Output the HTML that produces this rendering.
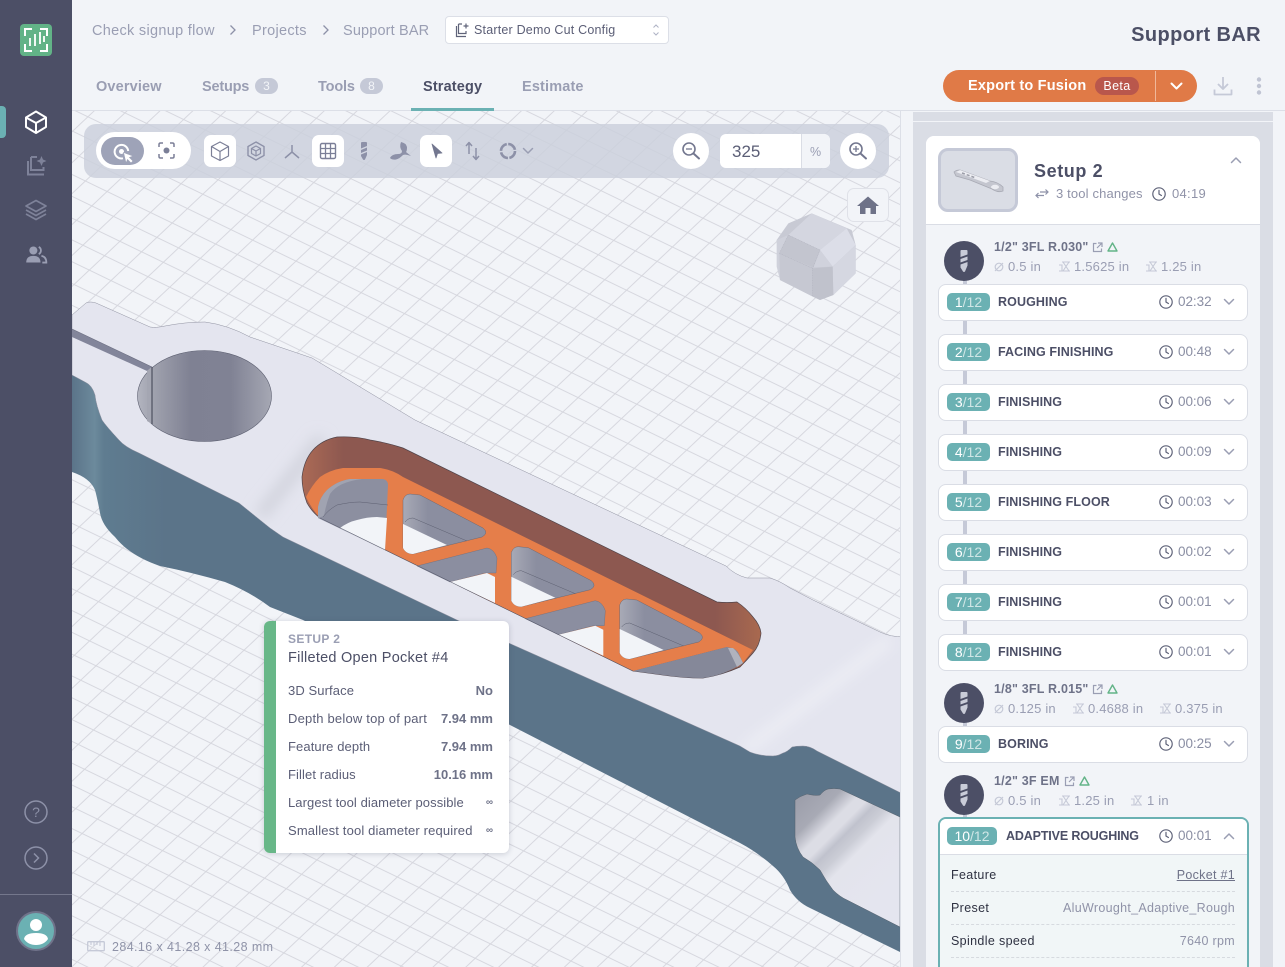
<!DOCTYPE html>
<html><head><meta charset="utf-8"><title>Support BAR</title>
<style>
*{box-sizing:border-box}
html,body{margin:0;padding:0;width:1285px;height:967px;overflow:hidden}
body{background:#f2f4f8;font-family:"Liberation Sans","DejaVu Sans",sans-serif;color:#4c4f66}
#w{position:relative;width:1285px;height:967px;overflow:hidden}
.a{position:absolute;white-space:nowrap}
.t{position:absolute;white-space:nowrap;line-height:18px;height:18px}
svg{position:absolute;overflow:visible}
.crumb{font-size:14.5px;color:#9a9eb3;letter-spacing:.3px;top:22px}
.tab{font-size:14.5px;font-weight:bold;color:#9a9eb3;top:78px;letter-spacing:.15px}
.cnt{position:absolute;top:78px;height:16px;width:23px;border-radius:8px;background:#c5c9d7;color:#f2f4f8;font-size:12px;text-align:center;line-height:16px}
.ibox{position:absolute;top:135px;width:32px;height:32px;background:#fff;border-radius:7px}
.op{position:absolute;left:938px;width:310px;height:37px;background:#fff;border:1px solid #dadde5;border-radius:8px}
.bdg{position:absolute;left:8px;top:8px;height:18px;width:43px;border-radius:5px;background:#6bb1b3;color:#fff;font-size:14px;line-height:18px;text-align:center}
.bdg i{font-style:normal;color:#cfe6e6}
.nm{position:absolute;left:59px;top:8px;line-height:18px;font-size:12.5px;font-weight:bold;letter-spacing:.1px;color:#4c4f66;white-space:nowrap}
.tm{position:absolute;left:239px;top:8px;line-height:18px;font-size:13.5px;color:#8a8ea3;letter-spacing:-.05px}
.con{position:absolute;left:963px;width:4px;background:#c5c9d7}
.tname{font-size:12.5px;font-weight:bold;color:#6e7288;letter-spacing:.2px}
.st{font-size:13px;color:#9a9eb3;letter-spacing:.2px}
.tr{font-size:13px;color:#5b5e76;left:288px;letter-spacing:.1px}
.tv{font-size:13px;color:#6e7288;font-weight:bold;right:792px;letter-spacing:0}
.fl{font-size:12.5px;color:#2f3242;left:951px;letter-spacing:.35px}
.fv{font-size:12.5px;color:#9093a8;right:50px;letter-spacing:.3px}
.dash{position:absolute;left:951px;width:284px;border-top:1px dashed #d6dadf}
</style></head><body><div id="w">

<svg width="0" height="0" style="position:absolute;left:0;top:0">
<defs>
<symbol id="clock" viewBox="0 0 14 14"><circle cx="7" cy="7" r="6.200" fill="none" stroke="#5f6379" stroke-width="1.200"/><path d="M7 3.400V7l2.400 1.500" fill="none" stroke="#5f6379" stroke-width="1.200" stroke-linecap="round"/></symbol>
<symbol id="down" viewBox="0 0 12 8"><path d="M1.500 1.500 6 6l4.500-4.500" fill="none" stroke="#9a9eb3" stroke-width="1.500" stroke-linecap="round" stroke-linejoin="round"/></symbol>
<symbol id="up" viewBox="0 0 12 8"><path d="M1.500 6.500 6 2l4.500 4.500" fill="none" stroke="#9a9eb3" stroke-width="1.500" stroke-linecap="round" stroke-linejoin="round"/></symbol>
<symbol id="tool" viewBox="0 0 40 40"><circle cx="20" cy="20" r="20" fill="#4c4f66"/><path d="M16.500 10q0-1 1-1h5q1 0 1 1v3.500l-7 2.500zM16.500 18l7-2.500v3.500l-7 2.500zM16.500 23.500l7-2.500v3.500l-2.500 6q-1 1-2 0l-2.500-4z" fill="#c9ccd8"/></symbol>
<symbol id="ext" viewBox="0 0 11 11"><path d="M9.500 6.500v3h-8v-8h3M6 1h4v4M10 1 5 6" fill="none" stroke="#9a9eb3" stroke-width="1.200"/></symbol>
<symbol id="tri" viewBox="0 0 11 10"><path d="M5.500 1 10 9H1z" fill="none" stroke="#62b387" stroke-width="1.400" stroke-linejoin="round"/></symbol>
<symbol id="dia" viewBox="0 0 10 10"><circle cx="5" cy="5" r="3.800" fill="none" stroke="#c5c9d7" stroke-width="1.200"/><path d="M1 9 9 1" stroke="#c5c9d7" stroke-width="1.200"/></symbol>
<symbol id="flute" viewBox="0 0 13 11"><path d="M1 4h3v6H1M4 1h8M5 1l6 9M11 1 5 10M4 10h8" fill="none" stroke="#c5c9d7" stroke-width="1.100"/></symbol>
</defs></svg>

<!-- viewport -->
<svg style="left:72px;top:111px" width="828" height="856" viewBox="72 111 828 856">
<defs>
<pattern id="g" patternUnits="userSpaceOnUse" width="100" height="100" patternTransform="matrix(.217 .105 .153 -.144 533.3 223.3)">
<rect x="0" y="-2.500" width="100" height="5" fill="#d6d7de"/><rect x="0" y="97.500" width="100" height="5" fill="#d6d7de"/>
<rect x="-2.200" y="0" width="4.400" height="100" fill="#d6d7de"/><rect x="97.800" y="0" width="4.400" height="100" fill="#d6d7de"/>
</pattern>
<filter id="b5" x="-100%" y="-100%" width="300%" height="300%"><feGaussianBlur stdDeviation="7"/></filter>
<path id="surf" d="M72 315 L86 303Q90 301 96 303L150 327Q156 328 165 326Q185 322 205 322Q228 325 250 337L312 358 415 420 726 566Q735 575 747 578L770 578Q780 581 790 588L813 600 880 632Q890 637 905 637V795L817 751Q810 746 803 746Q796 746 792 747Q787 752 783 753Q778 756 773 756Q760 756 750 752L740 746 457 620 283 537 270 528 239 503 139 453Q125 447 119 440Q106 426 102 420 96 405 95 395 92 385 85 382L72 375Z"/>
<clipPath id="sc"><use href="#surf"/></clipPath>
<linearGradient id="wall" x1="302" x2="761" y1="0" y2="0" gradientUnits="userSpaceOnUse">
<stop offset="0" stop-color="#ab6a55"/><stop offset=".09" stop-color="#8d5850"/><stop offset=".9" stop-color="#8d5850"/><stop offset="1" stop-color="#a9694f"/></linearGradient>
<linearGradient id="hole" x1="137" x2="271" y1="0" y2="0" gradientUnits="userSpaceOnUse">
<stop offset="0" stop-color="#b3b5c0"/><stop offset=".12" stop-color="#a0a2ae"/><stop offset=".4" stop-color="#7f8193"/><stop offset=".7" stop-color="#808294"/><stop offset="1" stop-color="#a5a7b3"/></linearGradient>
<linearGradient id="win" x1="795" y1="800" x2="885" y2="890" gradientUnits="userSpaceOnUse">
<stop offset="0" stop-color="#9c9eaa"/><stop offset=".2" stop-color="#a8aab5"/><stop offset=".33" stop-color="#dcdde5"/><stop offset=".4" stop-color="#dcdde5"/><stop offset=".47" stop-color="#c0c2cd"/><stop offset=".55" stop-color="#cbcdd6"/><stop offset=".64" stop-color="#e3e4ec"/><stop offset="1" stop-color="#e4e5ef"/></linearGradient>
<linearGradient id="blue" x1="72" x2="260" y1="0" y2="0" gradientUnits="userSpaceOnUse">
<stop offset="0" stop-color="#5b7489"/><stop offset=".12" stop-color="#6c8a9c"/><stop offset=".17" stop-color="#5f7c90"/><stop offset=".5" stop-color="#5b7489"/></linearGradient>
<linearGradient id="wg" x1="0" x2="1" y1="0" y2="0"><stop offset="0" stop-color="#a8aab6"/><stop offset=".3" stop-color="#8b8ea0"/><stop offset="1" stop-color="#8b8ea0"/></linearGradient>
<g id="tri1">
<path d="M403 500Q405 494 410 494L420 495 483 528Q489 533 482 537L413 554Q406 554 403 548Z" fill="url(#wg)" stroke="#5c5f70" stroke-width=".4"/>
<path d="M403 524 447 545 413 554Q406 554 403 548Z" fill="#f2f4f8"/>
<path d="M405 522Q408 518 413 518L467 541" fill="none" stroke="#5c5f70" stroke-width=".5"/>
</g>
<g id="seg1">
<path d="M417 566 487 548Q494 549 497 558L496 573 485 573 450 582Z" fill="#8b8ea0" stroke="#6a6d80" stroke-width=".4"/>
<path d="M450 582 487 573 495 577 495 603Z" fill="#f2f4f8"/>
</g>
</defs>
<rect x="72" y="111" width="828" height="856" fill="#f2f4f8"/>
<rect x="72" y="111" width="828" height="856" fill="url(#g)"/>

<!-- blue side -->
<path d="M72 375 L900 792 V952 L810 908 Q797 902 790 890 Q784 875 773 866 Q757 852 740 843 L510 725 L303 620 L270 607 Q250 592 225 582 Q190 572 160 566 Q130 556 115 537 Q102 525 100 513 Q97 497 95 490 Q90 478 72 472Z" fill="url(#blue)"/>
<!-- top surface -->
<use href="#surf" fill="#e4e5ef" stroke="#8f91a0" stroke-width=".5"/>
<g clip-path="url(#sc)">
<path d="M322 438 260 516" stroke="#d0d2db" stroke-width="12" filter="url(#b5)" fill="none"/>
<path d="M890 640 745 750" stroke="#eff0f6" stroke-width="9" filter="url(#b5)" fill="none"/>
</g>
<!-- window -->
<path d="M795 800Q800 796 807 794 815 796 820 795 824 790 828 789 834 788 840 789L900 817V927L847 900Q840 897 833 890 826 881 820 870 812 862 803 857 796 848 795 837Z" fill="url(#win)" stroke="#54606c" stroke-width=".5"/>
<!-- round hole -->
<ellipse cx="204.500" cy="396" rx="67" ry="45.500" fill="url(#hole)" stroke="#5c5f70" stroke-width=".6"/>
<path d="M72 329 152 367 147 371 72 337Z" fill="#82859a"/>
<path d="M72 329 152 367" stroke="#6b6e80" stroke-width=".6"/>
<path d="M147 371 152 367V424L147 421Z" fill="#a4a6b2"/>
<path d="M152 367V424" stroke="#4e5060" stroke-width="1.200"/>

<!-- pocket -->
<path d="M302 477Q304 460 313 450 322 440 337 437 355 436 370 440 388 443 403 448L717 602Q727 603 737 602 746 608 753 617 760 625 761 633 760 645 753 653 747 660 740 667 722 675 703 678 683 678 663 675L633 671 320 518Q312 512 307 503 302 490 302 477Z" fill="url(#wall)" stroke="#50444a" stroke-width=".7"/>
<path d="M306 497Q312 485 320 477 330 470 343 468L380 468Q393 470 403 477L753 650 743 663 727 647 633 671 320 518Q311 508 306 497Z" fill="#e57e4a"/>
<path d="M318 518V507Q320 497 327 490 337 481 350 479L383 479Q388 480 388 485L385 550Z" fill="#8c8fa0"/>
<path d="M318 518V507Q320 497 327 490 337 481 350 479L362 479Q338 482 330 494 326 504 324 516Z" fill="#a0a3b1"/>
<path d="M340 528Q348 522 357 520 367 517 377 517L387 518 385 550Z" fill="#f2f4f8"/>
<path d="M323 517Q328 510 337 505 350 502 360 502L388 505" fill="none" stroke="#5c5f70" stroke-width=".5"/>
<use href="#tri1"/>
<use href="#tri1" x="108.300" y="52.700"/>
<use href="#tri1" x="216.700" y="105"/>
<use href="#seg1"/>
<use href="#seg1" x="108.300" y="52.700"/>
<path d="M633 671 727 647Q735 648 738 652L743 663Q725 675 703 678 683 678 663 675Z" fill="#858899"/>
<path d="M733 648Q738 652 743 663L737 667 728 648Z" fill="#b0b2bd"/>
<path d="M320 518 633 671" stroke="#55586a" stroke-width=".5" fill="none"/>

<!-- nav cube -->
<g transform="translate(660 120) scale(.33333)">
<path d="M350 360 385 310 455 280 575 330 587 375V460L520 525 480 540 360 480Z" fill="#c8cad4"/>
<path d="M385 345 455 280 560 325 480 390Z" fill="#d4d6e0"/>
<path d="M480 390 560 325 587 375 518 440Z" fill="#dcdee8"/>
<path d="M518 440 587 375V460L520 525Z" fill="#d5d7e1"/>
<path d="M385 345 480 390 460 442 358 400Z" fill="#c3c5cf"/>
<path d="M480 390 518 440 460 442Z" fill="#d0d2dc"/>
<path d="M358 400 458 445V530L360 480Z" fill="#c6c8d2"/>
<path d="M458 445 518 440 520 525 480 540 458 530Z" fill="#c0c2cc"/>
<path d="M350 360 385 345 358 400 360 480 350 440Z" fill="#cfd1db"/>
<path d="M385 345 358 400 458 445 480 390ZM458 445V530" fill="none" stroke="#a8aab6" stroke-width="1.200" stroke-dasharray="3 2"/>
</g>
</svg>

<!-- toolbar -->
<div class="a" style="left:84px;top:124px;width:805px;height:54px;border-radius:12px;background:rgba(203,207,220,.82)"></div>
<div class="a" style="left:96px;top:132px;width:95px;height:37px;border-radius:19px;background:#fff"></div>
<div class="a" style="left:101px;top:137px;width:43px;height:28px;border-radius:14px;background:#9ea3b8"></div>
<svg style="left:112px;top:140px" width="24" height="24" viewBox="0 0 24 24"><path d="M11 18.300A6.800 6.800 0 1 1 16.200 11" fill="none" stroke="#fff" stroke-width="2"/><circle cx="9.500" cy="11.500" r="2.500" fill="#fff"/><path d="M11.500 12.500 21 16 17.500 17.500 21 21 19 23 15.500 19.500 14 23Z" fill="#fff" stroke="#9ea3b8" stroke-width=".6"/></svg>
<svg style="left:158px;top:142px" width="17" height="17" viewBox="0 0 17 17"><path d="M1 5V2.500Q1 1 2.500 1H5M12 1h2.500Q16 1 16 2.500V5M16 12v2.500Q16 16 14.500 16H12M5 16H2.500Q1 16 1 14.500V12" fill="none" stroke="#7b7f97" stroke-width="1.500"/><circle cx="8.500" cy="8.500" r="3" fill="#7b7f97"/></svg>
<div class="ibox" style="left:204px"></div><div class="ibox" style="left:312px"></div><div class="ibox" style="left:420px"></div>
<svg style="left:209px;top:140px" width="22" height="22" viewBox="0 0 22 22"><path d="M11 2 19.500 6.500V16L11 20.500 2.500 16V6.500ZM2.500 6.500 11 11.500 19.500 6.500M11 11.500V20.500" fill="none" stroke="#7b7f97" stroke-width="1.200" stroke-linejoin="round"/></svg>
<svg style="left:246px;top:141px" width="20" height="20" viewBox="0 0 20 20"><path d="M10 1 18 5.500V14.500L10 19 2 14.500V5.500Z" fill="none" stroke="#8d91a8" stroke-width="1.400"/><path d="M10 5 14.500 7.500V12.500L10 15 5.500 12.500V7.500ZM5.500 7.500 10 10 14.500 7.500M10 10V15" fill="none" stroke="#8d91a8" stroke-width="1.200"/></svg>
<svg style="left:283px;top:141px" width="18" height="20" viewBox="0 0 18 20"><path d="M9 4V11M9 11 2 17M9 11 16 17" fill="none" stroke="#8d91a8" stroke-width="1.500"/></svg>
<svg style="left:318px;top:141px" width="20" height="20" viewBox="0 0 20 20"><rect x="2.500" y="2.500" width="15" height="15" rx="1.500" fill="none" stroke="#7b7f97" stroke-width="1.400"/><path d="M7.500 2.500v15M12.500 2.500v15M2.500 7.500h15M2.500 12.500h15" stroke="#7b7f97" stroke-width="1.300"/></svg>
<svg style="left:359px;top:141px" width="10" height="20" viewBox="0 0 10 20"><path d="M2 2q0-1 1-1h4q1 0 1 1v3L2 7.500zM2 9l6-2.500V9.500L2 12zM2 13.500 8 11v3L6 18.500q-1 1-2 0L2 15z" fill="#8d91a8"/></svg>
<svg style="left:389px;top:140px" width="24" height="22" viewBox="0 0 24 22"><path d="M1 18Q3 14 9 14 13 14 13 11 10 7 12 2 17 3 18 7 18 11 17 12L22 16Q17 14 14 15 10 19 7 19.500 3 20 1 18Z" fill="#8d91a8"/></svg>
<svg style="left:429px;top:143px" width="14" height="16" viewBox="0 0 14 16"><path d="M3 1 13 10 8.500 10.500 7 15Z" fill="#73778f" stroke="#73778f" stroke-width=".8" stroke-linejoin="round"/></svg>
<svg style="left:464px;top:141px" width="17" height="20" viewBox="0 0 17 20"><path d="M5 13V2M2 5l3-3.500L8 5M12 7v11M9 15l3 3.500L15 15" fill="none" stroke="#8d91a8" stroke-width="1.500" stroke-linejoin="round"/></svg>
<svg style="left:499px;top:142px" width="18" height="18" viewBox="0 0 18 18"><circle cx="9" cy="9" r="7" fill="none" stroke="#8d91a8" stroke-width="2.600" stroke-dasharray="9.500 1.500"/></svg>
<svg style="left:522px;top:147px" width="12" height="8"><use href="#down" width="12" height="8"/></svg>

<div class="a" style="left:673px;top:133px;width:36px;height:36px;border-radius:50%;background:#fff"></div>
<svg style="left:681px;top:141px" width="20" height="20" viewBox="0 0 20 20"><circle cx="8" cy="8" r="6" fill="none" stroke="#73778f" stroke-width="1.600"/><path d="M5 8h6" stroke="#73778f" stroke-width="1.300"/><path d="M12.500 12.500 18 17.500" stroke="#73778f" stroke-width="2" stroke-linecap="round"/></svg>
<div class="a" style="left:720px;top:134px;width:110px;height:34px;border-radius:6px;background:#fff"></div>
<div class="a" style="left:801px;top:134px;width:29px;height:34px;border-radius:0 6px 6px 0;background:#f2f4f8;border-left:1px solid #dadde5"></div>
<div class="t" style="left:732px;top:143px;font-size:17px;color:#5b5e76;letter-spacing:0">325</div>
<div class="t" style="left:810px;top:143px;font-size:12.500px;color:#9a9eb3">%</div>
<div class="a" style="left:840px;top:133px;width:36px;height:36px;border-radius:50%;background:#fff"></div>
<svg style="left:848px;top:141px" width="20" height="20" viewBox="0 0 20 20"><circle cx="8" cy="8" r="6" fill="none" stroke="#73778f" stroke-width="1.600"/><path d="M5 8h6M8 5v6" stroke="#73778f" stroke-width="1.300"/><path d="M12.500 12.500 18 17.500" stroke="#73778f" stroke-width="2" stroke-linecap="round"/></svg>
<div class="a" style="left:847px;top:188px;width:42px;height:34px;border-radius:7px;background:#f2f4f8;border:1px solid #dfe1e8"></div>
<svg style="left:857px;top:196px" width="22" height="18" viewBox="0 0 22 18"><path d="M11 .5 22 10H19V18H13.500V12H8.500V18H3V10H0Z" fill="#6e7288"/></svg>

<!-- header -->
<div class="a" style="left:72px;top:0;width:1213px;height:111px;background:#f2f4f8;border-bottom:1px solid #dcdfe7"></div>
<div class="t crumb" style="left:92px">Check signup flow</div>
<svg style="left:229px;top:24px" width="8" height="12" viewBox="0 0 8 12"><path d="M1.500 1.500 6 6l-4.500 4.500" fill="none" stroke="#8d91a8" stroke-width="1.300"/></svg>
<div class="t crumb" style="left:252px">Projects</div>
<svg style="left:322px;top:24px" width="8" height="12" viewBox="0 0 8 12"><path d="M1.500 1.500 6 6l-4.500 4.500" fill="none" stroke="#8d91a8" stroke-width="1.300"/></svg>
<div class="t crumb" style="left:343px;letter-spacing:.15px">Support BAR</div>
<div class="a" style="left:445px;top:16px;width:224px;height:28px;background:#fff;border:1px solid #dcdfe7;border-radius:4px"></div>
<svg style="left:455px;top:22px" width="15" height="16" viewBox="0 0 15 16"><path d="M3.500 2V11.500H11V9M1.500 4V14.500H11" fill="none" stroke="#5f6379" stroke-width="1.200"/><path d="M3.500 2H7M11 1.500v5M8.500 4h5" stroke="#5f6379" stroke-width="1.200"/></svg>
<div class="t" style="left:474px;top:21px;font-size:12.500px;color:#5b5e76;letter-spacing:.2px">Starter Demo Cut Config</div>
<svg style="left:652px;top:23px" width="8" height="14" viewBox="0 0 8 14"><path d="M1.500 4.500 4 2l2.500 2.500M1.500 9.500 4 12l2.500-2.500" fill="none" stroke="#aeb2c4" stroke-width="1"/></svg>
<div class="t" style="right:24px;top:26px;font-size:20px;font-weight:bold;letter-spacing:.39px;color:#4c4f66">Support BAR</div>

<div class="t tab" style="left:96px">Overview</div>
<div class="t tab" style="left:202px;letter-spacing:-.2px">Setups</div><div class="cnt" style="left:255px">3</div>
<div class="t tab" style="left:318px;letter-spacing:-.15px">Tools</div><div class="cnt" style="left:360px">8</div>
<div class="t tab" style="left:423px;color:#4c4f66">Strategy</div>
<div class="a" style="left:411px;top:108px;width:83px;height:3px;background:#6bb1b3"></div>
<div class="t tab" style="left:522px">Estimate</div>

<div class="a" style="left:943px;top:70px;width:254px;height:32px;border-radius:16px;background:#e07a47"></div>
<div class="t" style="left:968px;top:77px;font-size:14.500px;font-weight:bold;color:#fff;letter-spacing:.2px">Export to Fusion</div>
<div class="a" style="left:1095px;top:77px;width:44px;height:18px;border-radius:9px;background:#b9574c;color:#fff;font-size:12.500px;line-height:18px;text-align:center;letter-spacing:.4px">Beta</div>
<div class="a" style="left:1155px;top:71px;width:1px;height:30px;background:#f0b89a"></div>
<svg style="left:1170px;top:82px" width="13" height="9" viewBox="0 0 13 9"><path d="M1.500 1.500 6.500 6.500l5-5" fill="none" stroke="#fff" stroke-width="2" stroke-linecap="round" stroke-linejoin="round"/></svg>
<svg style="left:1213px;top:76px" width="20" height="20" viewBox="0 0 20 20"><path d="M10 1V12.500M5 8l5 5 5-5M1.500 13.500V18.500H18.500V13.500" fill="none" stroke="#c5c9d7" stroke-width="1.800" stroke-linejoin="round"/></svg>
<svg style="left:1255px;top:76px" width="8" height="20"><circle cx="4" cy="3.500" r="2.200" fill="#c0c4d3"/><circle cx="4" cy="10" r="2.200" fill="#c0c4d3"/><circle cx="4" cy="16.500" r="2.200" fill="#c0c4d3"/></svg>

<!-- right panel -->
<div class="a" style="left:900px;top:111px;width:385px;height:856px;background:#f2f4f8;border-left:1px solid #dcdfe7"></div>
<div class="a" style="left:913px;top:112px;width:360px;height:855px;background:#dadde5"></div>
<div class="a" style="left:913px;top:121px;width:360px;height:1px;background:#f2f4f8"></div>
<div class="a" style="left:926px;top:136px;width:334px;height:831px;background:#f2f4f8;border-radius:8px 8px 0 0"></div>
<div class="a" style="left:926px;top:136px;width:334px;height:89px;background:#fff;border-radius:8px 8px 0 0;border-bottom:1px solid #dadde5"></div>
<div class="a" style="left:938px;top:148px;width:80px;height:64px;background:#dadde5;border:3px solid #c5c9d7;border-radius:10px"></div>
<svg style="left:950px;top:165px" width="56" height="30" viewBox="0 0 56 30"><path d="M4 7Q6 5 10 5L40 16Q48 17 53 22V26Q48 28 42 24L20 15 6 11Z" fill="#c4c6cf" stroke="#a8aab4" stroke-width=".8"/><path d="M6 7 10 5 40 16 36 18Z" fill="#eceDf2"/><ellipse cx="45" cy="22" rx="4" ry="2.200" fill="#eceDf2"/><path d="M12 8 26 13" stroke="#9b9da8" stroke-width="1.500" stroke-dasharray="3 2"/></svg>
<div class="t" style="left:1034px;top:162px;font-size:18px;font-weight:bold;letter-spacing:.6px;color:#4c4f66">Setup 2</div>
<svg style="left:1035px;top:188px" width="14" height="12" viewBox="0 0 14 12"><path d="M1 7.500H9M3.500 5 1 7.500 3.500 10M5 4H13M10.500 1.500 13 4 10.500 6.500" fill="none" stroke="#8d91a8" stroke-width="1.200"/></svg>
<div class="t" style="left:1056px;top:185px;font-size:13px;color:#9093a8;letter-spacing:.15px">3 tool changes</div>
<svg style="left:1152px;top:187px" width="14" height="14"><use href="#clock" width="14" height="14"/></svg>
<div class="t" style="left:1172px;top:185px;font-size:13px;color:#9093a8;letter-spacing:.3px">04:19</div>
<svg style="left:1230px;top:156px" width="12" height="8"><use href="#up" width="12" height="8"/></svg>

<!-- tool 1 -->
<div class="con" style="top:278px;height:8px"></div>
<svg style="left:944px;top:241px" width="40" height="40"><use href="#tool" width="40" height="40"/></svg>
<div class="t tname" style="left:994px;top:238px">1/2" 3FL R.030"</div>
<svg style="left:1092px;top:242px" width="11" height="11"><use href="#ext" width="11" height="11"/></svg>
<svg style="left:1107px;top:242px" width="11" height="10"><use href="#tri" width="11" height="10"/></svg>
<svg style="left:994px;top:262px" width="10" height="10"><use href="#dia" width="10" height="10"/></svg><div class="t st" style="left:1008px;top:258px">0.5 in</div>
<svg style="left:1058px;top:261px" width="13" height="11"><use href="#flute" width="13" height="11"/></svg><div class="t st" style="left:1074px;top:258px">1.5625 in</div>
<svg style="left:1145px;top:261px" width="13" height="11"><use href="#flute" width="13" height="11"/></svg><div class="t st" style="left:1161px;top:258px">1.25 in</div>

<!-- connectors -->
<div class="con" style="top:320px;height:14px"></div><div class="con" style="top:370px;height:14px"></div><div class="con" style="top:420px;height:14px"></div><div class="con" style="top:470px;height:14px"></div><div class="con" style="top:520px;height:14px"></div><div class="con" style="top:570px;height:14px"></div><div class="con" style="top:620px;height:14px"></div>

<div class="op" style="top:284px"><div class="bdg">1<i>/12</i></div><div class="nm">ROUGHING</div><svg style="left:220px;top:10px" width="14" height="14"><use href="#clock" width="14" height="14"/></svg><div class="tm">02:32</div><svg style="left:284px;top:13px" width="12" height="8"><use href="#down" width="12" height="8"/></svg></div>
<div class="op" style="top:334px"><div class="bdg">2<i>/12</i></div><div class="nm">FACING FINISHING</div><svg style="left:220px;top:10px" width="14" height="14"><use href="#clock" width="14" height="14"/></svg><div class="tm">00:48</div><svg style="left:284px;top:13px" width="12" height="8"><use href="#down" width="12" height="8"/></svg></div>
<div class="op" style="top:384px"><div class="bdg">3<i>/12</i></div><div class="nm">FINISHING</div><svg style="left:220px;top:10px" width="14" height="14"><use href="#clock" width="14" height="14"/></svg><div class="tm">00:06</div><svg style="left:284px;top:13px" width="12" height="8"><use href="#down" width="12" height="8"/></svg></div>
<div class="op" style="top:434px"><div class="bdg">4<i>/12</i></div><div class="nm">FINISHING</div><svg style="left:220px;top:10px" width="14" height="14"><use href="#clock" width="14" height="14"/></svg><div class="tm">00:09</div><svg style="left:284px;top:13px" width="12" height="8"><use href="#down" width="12" height="8"/></svg></div>
<div class="op" style="top:484px"><div class="bdg">5<i>/12</i></div><div class="nm">FINISHING FLOOR</div><svg style="left:220px;top:10px" width="14" height="14"><use href="#clock" width="14" height="14"/></svg><div class="tm">00:03</div><svg style="left:284px;top:13px" width="12" height="8"><use href="#down" width="12" height="8"/></svg></div>
<div class="op" style="top:534px"><div class="bdg">6<i>/12</i></div><div class="nm">FINISHING</div><svg style="left:220px;top:10px" width="14" height="14"><use href="#clock" width="14" height="14"/></svg><div class="tm">00:02</div><svg style="left:284px;top:13px" width="12" height="8"><use href="#down" width="12" height="8"/></svg></div>
<div class="op" style="top:584px"><div class="bdg">7<i>/12</i></div><div class="nm">FINISHING</div><svg style="left:220px;top:10px" width="14" height="14"><use href="#clock" width="14" height="14"/></svg><div class="tm">00:01</div><svg style="left:284px;top:13px" width="12" height="8"><use href="#down" width="12" height="8"/></svg></div>
<div class="op" style="top:634px"><div class="bdg">8<i>/12</i></div><div class="nm">FINISHING</div><svg style="left:220px;top:10px" width="14" height="14"><use href="#clock" width="14" height="14"/></svg><div class="tm">00:01</div><svg style="left:284px;top:13px" width="12" height="8"><use href="#down" width="12" height="8"/></svg></div>

<!-- tool 2 -->
<div class="con" style="top:720px;height:8px"></div>
<svg style="left:944px;top:683px" width="40" height="40"><use href="#tool" width="40" height="40"/></svg>
<div class="t tname" style="left:994px;top:680px">1/8" 3FL R.015"</div>
<svg style="left:1092px;top:684px" width="11" height="11"><use href="#ext" width="11" height="11"/></svg>
<svg style="left:1107px;top:684px" width="11" height="10"><use href="#tri" width="11" height="10"/></svg>
<svg style="left:994px;top:704px" width="10" height="10"><use href="#dia" width="10" height="10"/></svg><div class="t st" style="left:1008px;top:700px">0.125 in</div>
<svg style="left:1072px;top:703px" width="13" height="11"><use href="#flute" width="13" height="11"/></svg><div class="t st" style="left:1088px;top:700px">0.4688 in</div>
<svg style="left:1159px;top:703px" width="13" height="11"><use href="#flute" width="13" height="11"/></svg><div class="t st" style="left:1175px;top:700px">0.375 in</div>
<div class="op" style="top:726px"><div class="bdg">9<i>/12</i></div><div class="nm">BORING</div><svg style="left:220px;top:10px" width="14" height="14"><use href="#clock" width="14" height="14"/></svg><div class="tm">00:25</div><svg style="left:284px;top:13px" width="12" height="8"><use href="#down" width="12" height="8"/></svg></div>

<!-- tool 3 -->
<div class="con" style="top:812px;height:8px"></div>
<svg style="left:944px;top:775px" width="40" height="40"><use href="#tool" width="40" height="40"/></svg>
<div class="t tname" style="left:994px;top:772px">1/2" 3F EM</div>
<svg style="left:1064px;top:776px" width="11" height="11"><use href="#ext" width="11" height="11"/></svg>
<svg style="left:1079px;top:776px" width="11" height="10"><use href="#tri" width="11" height="10"/></svg>
<svg style="left:994px;top:796px" width="10" height="10"><use href="#dia" width="10" height="10"/></svg><div class="t st" style="left:1008px;top:792px">0.5 in</div>
<svg style="left:1058px;top:795px" width="13" height="11"><use href="#flute" width="13" height="11"/></svg><div class="t st" style="left:1074px;top:792px">1.25 in</div>
<svg style="left:1130px;top:795px" width="13" height="11"><use href="#flute" width="13" height="11"/></svg><div class="t st" style="left:1147px;top:792px">1 in</div>

<!-- expanded op -->
<div class="a" style="left:938px;top:817px;width:311px;height:170px;background:#f1f6f7;border:2px solid #6bb1b3;border-radius:8px"></div>
<div class="a" style="left:940px;top:819px;width:307px;height:36px;background:#fff;border-bottom:1px solid #dadde5;border-radius:6px 6px 0 0"></div>
<div class="a" style="left:947px;top:827px;width:50px;height:18px;border-radius:5px;background:#6bb1b3;color:#fff;font-size:14px;line-height:18px;text-align:center">10<span style="color:#cfe6e6">/12</span></div>
<div class="t" style="left:1006px;top:827px;font-size:12.500px;font-weight:bold;letter-spacing:-.15px;color:#4c4f66">ADAPTIVE ROUGHING</div>
<svg style="left:1159px;top:829px" width="14" height="14"><use href="#clock" width="14" height="14"/></svg>
<div class="t" style="left:1178px;top:827px;font-size:13.500px;color:#8a8ea3;letter-spacing:-.05px">00:01</div>
<svg style="left:1223px;top:832px" width="12" height="8"><use href="#up" width="12" height="8"/></svg>
<div class="t fl" style="top:866px">Feature</div>
<div class="t fv" style="top:866px;text-decoration:underline;color:#6e7288">Pocket #1</div>
<div class="dash" style="top:891px"></div>
<div class="t fl" style="top:899px">Preset</div>
<div class="t fv" style="top:899px">AluWrought_Adaptive_Rough</div>
<div class="dash" style="top:924px"></div>
<div class="t fl" style="top:932px">Spindle speed</div>
<div class="t fv" style="top:932px">7640 rpm</div>
<div class="dash" style="top:957px"></div>

<!-- tooltip -->
<div class="a" style="left:264px;top:621px;width:245px;height:232px;background:#fff;border-radius:6px;box-shadow:0 1px 6px rgba(60,64,90,.22);overflow:hidden"><div style="position:absolute;left:0;top:0;width:12px;height:232px;background:#68b788"></div></div>
<div class="t" style="left:288px;top:630px;font-size:12px;font-weight:bold;color:#9a9eb3;letter-spacing:.35px">SETUP 2</div>
<div class="t" style="left:288px;top:649px;font-size:14.500px;color:#4c4f66;letter-spacing:.25px">Filleted Open Pocket #4</div>
<div class="t tr" style="top:682px">3D Surface</div><div class="t tv" style="top:682px">No</div>
<div class="t tr" style="top:710px;letter-spacing:.2px">Depth below top of part</div><div class="t tv" style="top:710px">7.94 mm</div>
<div class="t tr" style="top:738px">Feature depth</div><div class="t tv" style="top:738px">7.94 mm</div>
<div class="t tr" style="top:766px">Fillet radius</div><div class="t tv" style="top:766px">10.16 mm</div>
<div class="t tr" style="top:794px;letter-spacing:.08px">Largest tool diameter possible</div><div class="t tv" style="top:794px;font-size:10px">∞</div>
<div class="t tr" style="top:822px;letter-spacing:.15px">Smallest tool diameter required</div><div class="t tv" style="top:822px;font-size:10px">∞</div>

<!-- dims -->
<svg style="left:87px;top:941px" width="18" height="11" viewBox="0 0 18 11"><rect x=".7" y=".7" width="16.600" height="9" rx="1" fill="none" stroke="#c5c9d7" stroke-width="1.300"/><path d="M4 1v3M7 1v4M10 1v3M13 1v4" stroke="#c5c9d7" stroke-width="1.100"/></svg>
<div class="t" style="left:112px;top:938px;font-size:12.500px;color:#8f93a8;letter-spacing:.4px">284.16 x 41.28 x 41.28 mm</div>

<!-- sidebar -->
<div class="a" style="left:0;top:0;width:72px;height:967px;background:#4c4f66"></div>
<svg style="left:20px;top:24px" width="32" height="32" viewBox="0 0 32 32"><rect width="32" height="32" rx="4" fill="#62b387"/><path d="M5 12V5H12M20 5H27V12M27 20V27H20M12 27H5V20" fill="none" stroke="#fff" stroke-width="2"/><path d="M10 14V22M15 10V22M20 8V20M24 12V18" stroke="#fff" stroke-width="1.800" fill="none"/></svg>
<div class="a" style="left:0;top:106px;width:6px;height:32px;background:#6bb1b3;border-radius:0 4px 4px 0"></div>
<svg style="left:24px;top:110px" width="24" height="24" viewBox="0 0 24 24"><path d="M12 1.500 22 7.500V17L12 23 2 17V7.500ZM2 7.500 12 13 22 7.500M12 13V23" fill="none" stroke="#fff" stroke-width="2" stroke-linejoin="round"/></svg>
<svg style="left:26px;top:155px" width="22" height="22" viewBox="0 0 22 22"><path d="M5 2H11M5 2V15H17.500V12M2 6V19.500H18" fill="none" stroke="#7e8299" stroke-width="2"/><path d="M15.500 1 17 4.500 20.500 6 17 7.500 15.500 11 14 7.500 10.500 6 14 4.500Z" fill="#7e8299"/></svg>
<svg style="left:25px;top:199px" width="22" height="22" viewBox="0 0 22 22"><path d="M11 1.500 21 7 11 12.500 1 7Z" fill="none" stroke="#7e8299" stroke-width="1.700" stroke-linejoin="round"/><path d="M1 11 11 16.500 21 11M1 15 11 20.500 21 15" fill="none" stroke="#7e8299" stroke-width="1.700"/></svg>
<svg style="left:25px;top:246px" width="23" height="17" viewBox="0 0 23 19"><circle cx="8" cy="5" r="4.500" fill="#9a9eb3"/><path d="M0 18.500Q0 11 8 11 16 11 16 18.500Z" fill="#9a9eb3"/><path d="M14 1A4.500 4.500 0 0 1 14 9M17 11Q22.500 12 22.500 18.500H18" fill="none" stroke="#9a9eb3" stroke-width="2"/></svg>
<svg style="left:24px;top:800px" width="24" height="24" viewBox="0 0 24 24"><circle cx="12" cy="12" r="11" fill="none" stroke="#8d91a8" stroke-width="1.500"/><text x="12" y="17" text-anchor="middle" font-family="Liberation Sans" font-size="14" fill="#8d91a8">?</text></svg>
<svg style="left:24px;top:846px" width="24" height="24" viewBox="0 0 24 24"><circle cx="12" cy="12" r="11" fill="none" stroke="#8d91a8" stroke-width="1.500"/><path d="M10 7.500 14.500 12 10 16.500" fill="none" stroke="#8d91a8" stroke-width="1.500"/></svg>
<div class="a" style="left:0;top:894px;width:72px;height:1px;background:#74778c"></div>
<svg style="left:16px;top:911px" width="40" height="40" viewBox="0 0 40 40"><circle cx="20" cy="20" r="19" fill="#6bb1b3" stroke="#70738a" stroke-width="2"/><circle cx="20" cy="14" r="6" fill="#fff"/><path d="M8 28Q9 22 20 22 31 22 32 28 28 34 20 34 12 34 8 28Z" fill="#fff"/></svg>
</div></body></html>
